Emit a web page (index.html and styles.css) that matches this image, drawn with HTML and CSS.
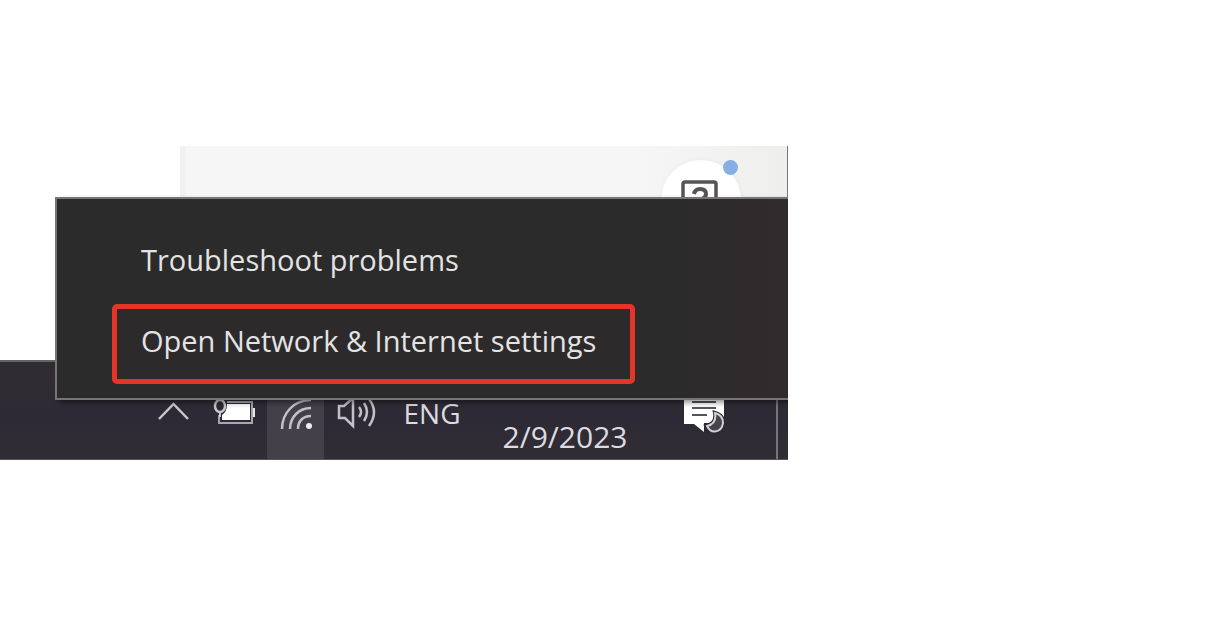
FILE: index.html
```html
<!DOCTYPE html>
<html lang="en">
<head>
  <meta charset="UTF-8" />
  <meta name="viewport" content="width=device-width, initial-scale=1.0"/>
  <title>Network menu</title>
  <link rel="stylesheet" href="styles.css">
</head>
<body>

  <main class="desktop">
    <div class="window">
      <button class="help" aria-label="Help">
        <svg width="80" height="80" viewBox="0 0 80 80">
          <rect x="22" y="22" width="33" height="33" rx="2" fill="none" stroke="#555" stroke-width="3.500"/>
          <path d="M33 34 q1 -5 6 -5 q6 0 6 5 q0 3 -4 5 q-2 1 -2 5" fill="none" stroke="#555" stroke-width="4"/>
        </svg>
        <span class="badge"></span>
      </button>
    </div>

    <footer class="taskbar">
      <button class="tray chevron" aria-label="Show hidden icons">
        <svg width="32" height="40" viewBox="0 0 32 40">
          <path d="M2 26 L16.500 11 L31 26" fill="none" stroke="#c9c7cb" stroke-width="2.500"/>
        </svg>
      </button>
      <button class="tray battery" aria-label="Battery">
        <svg width="42" height="40" viewBox="0 0 42 40">
          <path d="M14 9 H39 V30 H6 V22" fill="none" stroke="#a9a7ac" stroke-width="2"/>
          <path d="M14 11 H37 V27 H9 V22 Q14 19 14 11Z" fill="#fff"/>
          <path d="M41 15 V24" stroke="#e8e8ea" stroke-width="2"/>
          <path d="M4 9 V4 M10 9 V4 M7 19 V24" stroke="#c9c7cb" stroke-width="2"/>
          <ellipse cx="7" cy="13" rx="5" ry="6" fill="#2d2a33" stroke="#c9c7cb" stroke-width="2.500"/>
        </svg>
      </button>
      <button class="tray wifi" aria-label="Network">
        <svg width="36" height="40" viewBox="0 0 36 40">
          <g fill="none" stroke="#c3c1c7" stroke-width="2.500">
            <path d="M4 36 C4 20 16 7 33 7"/>
            <path d="M12 36 C12 24 21 15 33 15"/>
            <path d="M20 36 C20 28 25 23 33 23"/>
          </g>
          <circle cx="31" cy="33" r="3" fill="#eeedf0"/>
        </svg>
      </button>
      <button class="tray volume" aria-label="Volume">
        <svg width="40" height="40" viewBox="0 0 40 40">
          <g fill="none" stroke="#c3c1c7" stroke-width="2.500">
            <path d="M3 13 H8 L17 5 V33 L9 25 H3Z"/>
            <path d="M23 14 Q27 19 23 24"/>
            <path d="M28 10 Q34 19 28 28"/>
            <path d="M33 6 Q43 19 33 33"/>
          </g>
        </svg>
      </button>
      <button class="tray lang">ENG</button>
      <time class="date" datetime="2023-02-09">2/9/2023</time>
      <button class="tray notify" aria-label="Notifications">
        <svg width="42" height="40" viewBox="0 0 42 40">
          <path d="M1 4 H41 V30 H21 V39 L11 31 H1Z" fill="#fff"/>
          <path d="M9 9 H33 M9 15 H33 M9 22 H24" stroke="#56535b" stroke-width="2"/>
          <path d="M32 20 Q34 31 23 33 Q25 40 32 39.500 Q40 39 41 31 Q41 23 32 20Z" fill="#37343c" stroke="#2d2a33" stroke-width="4"/>
          <path d="M32 20 Q34 31 24 33 Q27 39 32 38.500 Q39 38 40 30 Q40 22 32 20Z" fill="#47444c" stroke="#d3d1d5" stroke-width="2"/>
        </svg>
      </button>
      <span class="peek"></span>
    </footer>

    <nav class="menu">
      <button class="menu-item">Troubleshoot problems</button>
      <button class="menu-item marked">Open Network &amp; Internet settings</button>
    </nav>
  </main>

</body>
</html>
```
FILE: styles.css
```css
body {
  font-family: "Open Sans", "Noto Sans", sans-serif;
  background: #fff;
  margin: 0;
  padding-top: 146px;
}

button {
  font: inherit;
  color: inherit;
  background: none;
  border: none;
  padding: 0;
  cursor: pointer;
}

svg {
  display: block;
}

.desktop {
  position: relative;
  max-width: 788px;
  overflow: hidden;
}

.window {
  display: flex;
  justify-content: flex-end;
  box-sizing: border-box;
  height: 214px;
  margin-left: 180px;
  padding: 14px 46px 0 0;
  background: linear-gradient(90deg, #f6f6f6 75%, #eeefed);
  border-left: 6px solid #f1f1f1;
  border-right: 1px solid #777;
}

.help {
  position: relative;
  width: 80px;
  height: 80px;
  border-radius: 50%;
  background: #fff;
  box-shadow: 0 0 6px rgba(0,0,0,0.04);
}

.badge {
  position: absolute;
  top: 0;
  right: 3px;
  width: 15px;
  height: 15px;
  border-radius: 50%;
  background: #87afe6;
}

.taskbar {
  display: flex;
  justify-content: flex-end;
  box-sizing: border-box;
  height: 100px;
  color: #dddbe0;
  background: linear-gradient(#302d31, #2d2a35 60%, #302d34);
  border-top: 2px solid #666468;
  border-bottom: 1px solid #57555a;
}

.tray {
  display: flex;
  align-items: center;
  justify-content: center;
  padding-top: 4px;
}

.chevron {
  width: 56px;
}

.battery {
  width: 66px;
}

.wifi {
  width: 57px;
  background: #43404a;
}

.volume {
  width: 64px;
}

.lang {
  width: 88px;
  font-size: 28px;
}

.date {
  width: 178px;
  align-self: flex-end;
  text-align: center;
  font-size: 30px;
  line-height: 44px;
}

.notify {
  width: 100px;
}

.peek {
  width: 2px;
  margin: 0 10px 0 22px;
  background: #77757a;
}

.menu {
  position: absolute;
  top: 51px;
  left: 55px;
  right: 0;
  display: flex;
  flex-direction: column;
  align-items: flex-start;
  gap: 1px;
  box-sizing: border-box;
  padding: 24px 0 14px 55px;
  color: #e4e3e4;
  background: linear-gradient(90deg, #2b2b2b 80%, #302b2c);
  border: 2px solid #777578;
  border-right: none;
  box-shadow: 4px 3px 5px rgba(0,0,0,0.4);
}

.menu-item {
  padding: 0 34px 6px 24px;
  border: 5px solid transparent;
  border-radius: 5px;
  font-size: 29px;
  line-height: 64px;
  text-align: left;
}

.marked {
  background: #2d2a2c;
  border-color: #e53529;
}
```
